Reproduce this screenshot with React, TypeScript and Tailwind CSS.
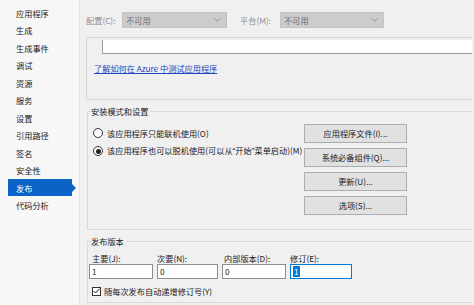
import React from 'react';

const navItems = ['应用程序', '生成', '生成事件', '调试', '资源', '服务', '设置', '引用路径', '签名', '安全性', '发布', '代码分析'];

function Radio({ checked, children }: { checked?: boolean; children: React.ReactNode }) {
  return (
    <div className="flex h-[18px] items-center whitespace-nowrap">
      <span className="ml-[5px] flex h-[10px] w-[10px] shrink-0 items-center justify-center rounded-full border border-[#333333] bg-white">
        {checked && <span className="h-[5px] w-[5px] rounded-full bg-[#222222]" />}
      </span>
      <span className="ml-[4px]">{children}</span>
    </div>
  );
}

function DisabledSelect({ width }: { width: string }) {
  return (
    <div className={`flex h-[16px] items-center justify-between border border-[#c3c3c3] bg-[#cccccc] pl-[3px] pr-[5px] text-[#6e6e6e] ${width}`}>
      <span>不可用</span>
      <svg width="7" height="4" viewBox="0 0 7 4" fill="none">
        <path d="M0.5 0.5 L3.5 3.2 L6.5 0.5" stroke="#8a8a8a" strokeWidth="0.9" />
      </svg>
    </div>
  );
}

function VersionField({ label, value, className, focused }: { label: string; value: string; className: string; focused?: boolean }) {
  return (
    <div className={className}>
      <div className="h-[12px] leading-[12px]">{label}</div>
      <div
        className={`flex h-[15px] items-center bg-white pl-[2px] ${
          focused ? 'border border-[#0078d7]' : 'border border-[#8c8c8c]'
        }`}
      >
        {focused ? (
          <span className="bg-[#0078d7] px-[1px] leading-[11px] text-white">{value}</span>
        ) : (
          <span className="leading-[11px]">{value}</span>
        )}
      </div>
    </div>
  );
}

export default function App() {
  const narrow = { fontFamily: '"Liberation Sans", sans-serif' };
  return (
    <div
      className="flex h-[305px] w-[474px] overflow-hidden bg-[#f0f0f0] text-[8.2px] text-[#1a1a1a]"
      style={{ fontFamily: '"Noto Sans CJK SC", "Noto Sans", sans-serif' }}
    >
      {/* side nav */}
      <div className="w-[80px] shrink-0 border-r border-[#e2e2e2] bg-[#f7f7f7] pt-[4px]">
        {navItems.map((item) => {
          const active = item === '发布';
          return (
            <div key={item} className="relative flex h-[17.5px] items-center">
              {active ? (
                <div className="relative ml-[8px] flex h-[17px] w-[64px] items-center bg-[#0a63c5] pl-[8px] text-white">
                  {item}
                  <span className="absolute right-[-4px] top-[4.5px] h-0 w-0 border-y-[4px] border-l-[4px] border-y-transparent border-l-[#0a63c5]" />
                </div>
              ) : (
                <span className="pl-[16px]">{item}</span>
              )}
            </div>
          );
        })}
      </div>

      {/* main */}
      <div className="flex min-w-0 flex-1 flex-col">
        <div className="flex h-[37px] items-start pt-[12px] pl-[6px] text-[#8d8d8d]">
          <span className="w-[36px] leading-[16px]">配置(C):</span>
          <DisabledSelect width="w-[105px]" />
          <span className="ml-[13px] w-[40px] leading-[16px]">平台(M):</span>
          <DisabledSelect width="w-[104px]" />
        </div>

        <div className="ml-[6px] mr-[2px] h-[63px] border-y border-l border-[#d6d6d6]">
          <div className="ml-[15px] mt-[2px] h-[14px] border-b border-l border-[#9a9a9a] bg-white" />
          <div className="ml-[7px] mt-[8px] leading-[12px] text-[#1a46c4] underline">了解如何在 Azure 中测试应用程序</div>
        </div>

        {/* install mode group */}
        <div className="relative ml-[7px] mr-[2px] mt-[11px] h-[119px] border-y border-l border-[#d9d9d9]">
          <span className="absolute left-[3px] top-[-7px] bg-[#f0f0f0] pr-[2px] leading-[12px]">安装模式和设置</span>
          <div className="flex">
            <div className="w-[216px] shrink-0 pt-[12px]">
              <Radio>该应用程序只能联机使用(O)</Radio>
              <Radio checked>
                该应用程序也可以脱机使用(可以从<span style={narrow}>“</span>开始<span style={narrow}>”</span>菜单启动)(M)
              </Radio>
            </div>
            <div className="flex flex-col gap-[5px] pt-[12px]">
              {['应用程序文件(I)...', '系统必备组件(Q)...', '更新(U)...', '选项(S)...'].map((b) => (
                <div key={b} className="flex h-[19px] w-[103px] items-center justify-center border border-[#adadad] bg-[#e1e1e1]">
                  {b}
                </div>
              ))}
            </div>
          </div>
        </div>

        {/* publish version group */}
        <div className="relative ml-[7px] mr-[2px] mt-[11px] h-[62px] border-y border-l border-[#d9d9d9]">
          <span className="absolute left-[3px] top-[-7px] bg-[#f0f0f0] pr-[2px] leading-[12px]">发布版本</span>
          <div className="flex pt-[10px]">
            <VersionField label="主要(J):" value="1" className="ml-[1px] w-[64px] [&>div:first-child]:pl-[3px]" />
            <VersionField label="次要(N):" value="0" className="ml-[4px] w-[61px]" />
            <VersionField label="内部版本(D):" value="0" className="ml-[4px] w-[64px] [&>div:first-child]:pl-[2px]" />
            <VersionField label="修订(E):" value="1" className="ml-[4px] w-[62px]" focused />
          </div>
          <div className="mt-[6px] flex h-[12px] items-center">
            <span className="ml-[4px] flex h-[9px] w-[9px] items-center justify-center border border-[#333333] bg-white">
              <svg width="7" height="6" viewBox="0 0 7 6" fill="none">
                <path d="M0.6 3 L2.6 5 L6.4 0.8" stroke="#222222" strokeWidth="1" />
              </svg>
            </span>
            <span className="ml-[3px]">随每次发布自动递增修订号(Y)</span>
          </div>
        </div>
      </div>
    </div>
  );
}
